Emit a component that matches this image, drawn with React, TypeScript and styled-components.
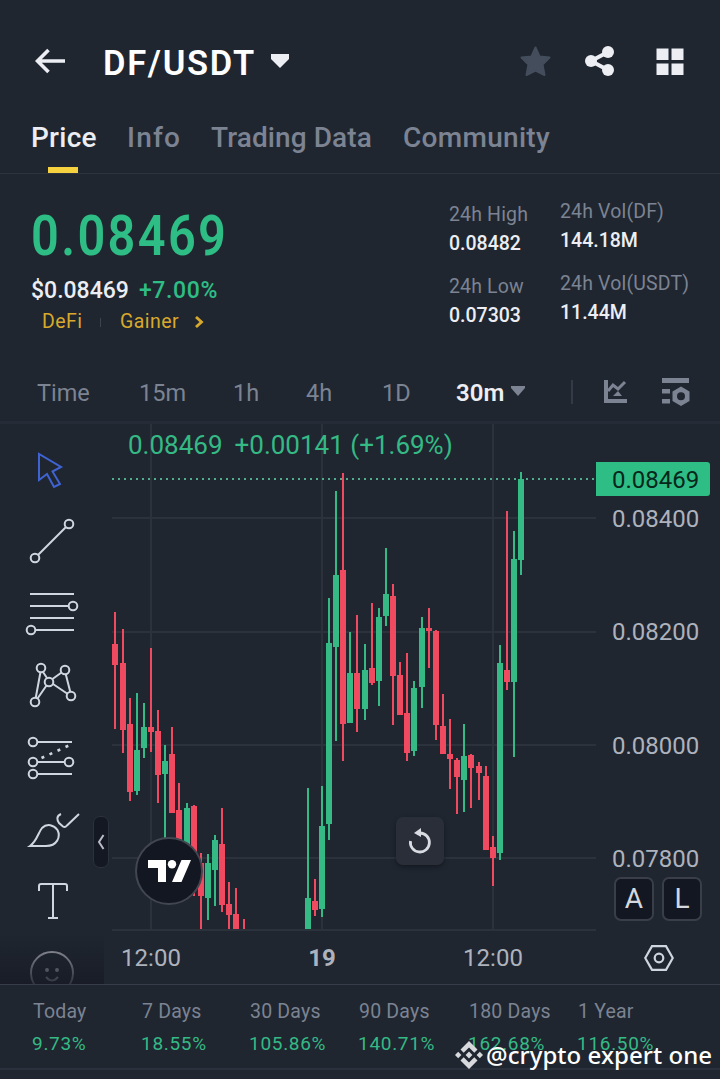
import React from 'react';
import styled, { createGlobalStyle, css } from 'styled-components';

const color = {
  bg: '#1f2630',
  line: '#2c333e',
  muted: '#7c8392',
  light: '#eceef3',
  green: '#2ebd85',
  candleUp: '#35b985',
  red: '#f04a60',
  gold: '#d9a92b',
  tool: '#d0d6e0',
  axis: '#aeb2bc',
};

const GlobalStyle = createGlobalStyle`
  * { box-sizing: border-box; }
  body { margin: 0; background: ${color.bg}; }
  svg { display: block; flex: none; }
`;

const Screen = styled.div`
  position: relative;
  width: 720px;
  height: 1079px;
  overflow: hidden;
  display: flex;
  flex-direction: column;
  background: ${color.bg};
  color: ${color.light};
  font-family: Roboto, 'Open Sans', sans-serif;
  white-space: nowrap;
`;

const Header = styled.header`
  height: 104px;
  padding: 18px 36px 0 35px;
  display: flex;
  align-items: center;
`;

const Title = styled.h1`
  margin: 0 0 0 37px;
  padding-top: 3px;
  width: 168px;
  font: 600 34.5px/44px Roboto, sans-serif;
  letter-spacing: 1.7px;
  color: #fff;
`;

const HeaderActions = styled.div`
  margin-left: auto;
  display: flex;
  align-items: center;
`;

const ShareSlot = styled.div`
  margin: 0 41px 0 34px;
`;

const Tabs = styled.nav`
  height: 70px;
  border-bottom: 1px solid ${color.line};
  padding-left: 31px;
  display: flex;
`;

const Tab = styled.a<{ $width: number; $active?: boolean; $spacing?: number }>`
  position: relative;
  width: ${(p) => p.$width}px;
  font: 500 28px/67px Roboto, sans-serif;
  letter-spacing: ${(p) => p.$spacing ?? 0.25}px;
  color: ${(p) => (p.$active ? color.light : color.muted)};
  ${(p) =>
    p.$active &&
    css`
      &::after {
        content: '';
        position: absolute;
        left: 17px;
        bottom: 0;
        width: 30px;
        height: 6px;
        background: #f5d13f;
      }
    `}
`;

const Summary = styled.section`
  height: 188px;
  display: flex;
  padding-left: 31px;
`;

const PriceBlock = styled.div`
  width: 418px;
  padding-top: 31px;
`;

const BigPrice = styled.div`
  width: 240px;
  font-size: 56px;
  line-height: 62px;
  font-weight: 600;
  letter-spacing: 2.7px;
  transform: scaleX(0.87);
  transform-origin: left;
  color: ${color.green};
`;

const PriceLine = styled.div`
  display: flex;
  margin-top: 9px;
  font-size: 23px;
  line-height: 30px;
  font-weight: 500;
`;

const Fiat = styled.span`
  width: 108px;
`;

const Change = styled.span`
  color: ${color.green};
  letter-spacing: 0.6px;
`;

const TagLine = styled.div`
  display: flex;
  align-items: center;
  padding-left: 11px;
  font-size: 19.5px;
  line-height: 32px;
  letter-spacing: 0.45px;
  color: ${color.gold};
`;

const TagDivider = styled.i`
  width: 1px;
  height: 9px;
  margin: 0 19px 0 18px;
  background: #3c4450;
`;

const TagText = styled.span<{ $width: number }>`
  width: ${(p) => p.$width}px;
`;

const StatColumn = styled.div<{ $width: number; $top: number }>`
  width: ${(p) => p.$width}px;
  padding-top: ${(p) => p.$top}px;
`;

const Stat = styled.div`
  height: 72px;
`;

const StatLabel = styled.div`
  font-size: 19.5px;
  line-height: 28px;
  letter-spacing: 0.15px;
  color: ${color.muted};
`;

const StatValue = styled.div`
  font-size: 19.5px;
  line-height: 29px;
  font-weight: 500;
`;

const Intervals = styled.div`
  height: 62px;
  padding-left: 37px;
  display: flex;
  align-items: center;
  border-bottom: 3px solid #252c37;
`;

const Interval = styled.span<{ $width: number; $active?: boolean }>`
  width: ${(p) => p.$width}px;
  padding-top: 3px;
  font-size: ${(p) => (p.$active ? 24 : 23.5)}px;
  line-height: 30px;
  font-weight: ${(p) => (p.$active ? 600 : 400)};
  color: ${(p) => (p.$active ? color.light : color.muted)};
`;

const IntervalDivider = styled.i`
  width: 2px;
  height: 24px;
  margin: 0 31px 0 46px;
  background: #343b46;
`;

const IndicatorSlot = styled.div`
  margin-right: 34px;
`;

const ChartPanel = styled.section`
  height: 561px;
  border-bottom: 1px solid #373e49;
  display: grid;
  grid-template-columns: 112px 484px 124px;
  grid-template-rows: 506px 54px;
`;

const Toolbar = styled.aside`
  grid-row: 1 / 3;
  position: relative;
  overflow: hidden;
  &::after {
    content: '';
    position: absolute;
    left: 0;
    bottom: 0;
    width: 104px;
    height: 50px;
    background: linear-gradient(rgba(23, 26, 37, 0), rgba(23, 26, 37, 0.82));
  }
`;

const Handle = styled.button`
  position: absolute;
  z-index: 1;
  left: 93px;
  top: 392px;
  width: 16px;
  height: 52px;
  padding: 0;
  border: 1px solid #2c323d;
  border-radius: 7px;
  background: #141823;
  display: flex;
  align-items: center;
  justify-content: center;
`;

const Plot = styled.div`
  position: relative;
`;

const Legend = styled.div`
  position: absolute;
  left: 16px;
  top: 6px;
  font-size: 26px;
  line-height: 31px;
  color: ${color.candleUp};
  display: flex;
  gap: 12px;
`;

const Logo = styled.div`
  position: absolute;
  left: 23px;
  top: 413px;
  width: 68px;
  height: 68px;
  border: 2px solid #424650;
  border-radius: 50%;
  background: #131722;
  display: flex;
  align-items: center;
  justify-content: center;
`;

const ResetButton = styled.button`
  position: absolute;
  left: 284px;
  top: 393px;
  width: 48px;
  height: 48px;
  padding: 0;
  border: 0;
  border-radius: 7px;
  background: #2a2e39;
  box-shadow: 0 2px 5px rgba(0, 0, 0, 0.35);
  display: flex;
  align-items: center;
  justify-content: center;
`;

const PriceAxis = styled.div`
  padding-top: 38px;
  font-size: 24px;
`;

const LastPrice = styled.div`
  width: 114px;
  height: 34px;
  padding-left: 16px;
  border-radius: 0 3px 3px 0;
  background: ${color.green};
  color: #08271b;
  line-height: 36px;
`;

const AxisLabels = styled.div`
  height: 378px;
  padding: 8px 0 0 16px;
  display: flex;
  flex-direction: column;
  justify-content: space-between;
  line-height: 30px;
  color: ${color.axis};
`;

const ScaleButtons = styled.div`
  display: flex;
  gap: 8px;
  padding: 3px 0 0 18px;
`;

const ScaleButton = styled.button`
  width: 40px;
  height: 44px;
  padding: 0;
  border: 2px solid #393e48;
  border-radius: 7px;
  background: #131722;
  color: #d5d8df;
  font: 400 28px/38px Roboto, sans-serif;
`;

const TimeAxis = styled.div`
  display: grid;
  grid-template-columns: 78px 1fr 78px;
  padding: 0 64px 0 0;
  color: ${color.axis};
  font-size: 24px;
  line-height: 57px;
  text-align: center;
`;

const TimeLabel = styled.span<{ $bold?: boolean }>`
  font-weight: ${(p) => (p.$bold ? 700 : 400)};
`;

const AxisSettings = styled.div`
  display: flex;
  align-items: center;
  padding: 2px 0 0 48px;
`;

const Performance = styled.section`
  height: 85px;
  border-bottom: 2px solid #2a313c;
  padding: 11px 0 0 33px;
  display: grid;
  grid-template-columns: 109px 108px 109px 110px 109px 1fr;
`;

const PeriodLabel = styled.div`
  font-size: 19.5px;
  line-height: 32px;
  letter-spacing: 0.2px;
  color: ${color.muted};
`;

const PeriodChange = styled.div`
  margin-left: -1px;
  font-size: 19px;
  line-height: 32px;
  letter-spacing: 0.7px;
  color: ${color.candleUp};
`;

const Watermark = styled.div`
  position: absolute;
  left: 455px;
  top: 1038px;
  height: 34px;
  display: flex;
  align-items: center;
  gap: 3px;
  color: #fff;
  font: 500 24px/34px 'Noto Sans', sans-serif;
  letter-spacing: 0.05px;
`;

type Candle = [x: number, high: number, top: number, bottom: number, low: number, up: 0 | 1];

const candles: Candle[] = [
  [115, 612, 644, 665, 729, 0], [123, 629, 663, 730, 753, 0], [130, 698, 724, 792, 801, 0],
  [137, 693, 750, 791, 795, 1], [144, 703, 727, 748, 758, 1], [151, 648, 727, 732, 752, 0],
  [158, 710, 731, 775, 803, 0], [165, 745, 761, 774, 840, 1], [172, 727, 754, 813, 813, 0],
  [179, 783, 810, 850, 850, 0], [187, 803, 808, 850, 850, 1], [194, 805, 806, 860, 896, 0],
  [201, 853, 863, 896, 929, 0], [208, 854, 863, 898, 920, 1], [215, 835, 840, 870, 906, 1],
  [222, 808, 844, 905, 912, 0], [229, 882, 904, 915, 929, 0], [236, 888, 914, 929, 929, 0],
  [244, 919, 929, 929, 929, 0], [308, 788, 898, 929, 929, 1], [315, 879, 901, 910, 916, 0],
  [322, 786, 826, 909, 917, 1], [329, 598, 643, 824, 840, 1], [336, 491, 575, 647, 741, 1],
  [343, 473, 570, 724, 761, 0], [350, 632, 673, 723, 723, 1], [357, 615, 673, 709, 732, 0],
  [365, 644, 670, 709, 720, 1], [372, 603, 668, 683, 685, 0], [379, 608, 617, 681, 706, 1],
  [386, 548, 594, 616, 626, 1], [393, 584, 596, 676, 725, 0], [400, 662, 675, 715, 715, 0],
  [407, 653, 713, 753, 761, 0], [414, 681, 688, 751, 756, 1], [422, 617, 628, 687, 708, 1],
  [429, 608, 628, 631, 668, 0], [436, 630, 631, 725, 740, 0], [443, 694, 726, 754, 754, 0],
  [450, 719, 754, 759, 789, 0], [457, 758, 760, 777, 814, 0], [464, 724, 756, 780, 812, 1],
  [471, 754, 755, 768, 808, 0], [479, 762, 766, 773, 800, 0], [486, 766, 776, 850, 850, 0],
  [493, 836, 847, 858, 886, 0], [500, 645, 663, 853, 860, 1], [507, 511, 670, 682, 690, 0],
  [514, 531, 559, 682, 757, 1], [521, 472, 479, 560, 575, 1],
];

const CandleChart = () => (
  <svg width="484" height="507" viewBox="112 424 484 507" shapeRendering="crispEdges">
    <g fill="#2b323c">
      {[517, 631, 744, 857].map((y) => <rect key={y} x="112" y={y} width="484" height="2" />)}
      {[150, 321, 492].map((x) => <rect key={x} x={x} y="424" width="2" height="506" />)}
      <rect x="112" y="929" width="484" height="2" />
    </g>
    <path d="M112 479H596" stroke="#51ad8b" strokeWidth="2" strokeDasharray="2 4" />
    {candles.map(([x, high, top, bottom, low, up]) => (
      <g key={x} fill={up ? color.candleUp : color.red}>
        <rect x={x - 1} y={high} width="2" height={low - high} />
        <rect x={x - 3} y={top} width="6" height={bottom - top} />
      </g>
    ))}
  </svg>
);

const DrawingTools = () => (
  <svg width="112" height="560" viewBox="0 424 112 560" fill="none" stroke={color.tool} strokeWidth="2">
    <path d="M39 454V480L47 474L54 487L60 484L52.5 471.5L61 467Z" stroke="#3f63d2" />
    <circle cx="69" cy="524" r="4.3" /><circle cx="35" cy="558" r="4.3" /><path d="M38 555L66 527" />
    <path d="M30 594H74M30 606H69M30 618H74M35 630H74" />
    <circle cx="73" cy="606" r="4.3" /><circle cx="31" cy="630" r="4.3" />
    <circle cx="41" cy="668" r="4.3" /><circle cx="65" cy="670" r="4.3" /><circle cx="49" cy="682" r="4.3" />
    <circle cx="71" cy="696" r="4.3" /><circle cx="35" cy="702" r="4.3" />
    <path d="M40.5 672L35.7 698M43 672L47 678M61.5 672.5L52.5 679M65.7 674L70.3 692M53 684L67 693.5M46.5 685.5L37.5 698.5" />
    <path d="M37 742H72M37 762H65M37 774H72" />
    <circle cx="33" cy="742" r="4.3" /><circle cx="33" cy="762" r="4.3" /><circle cx="69" cy="762" r="4.3" /><circle cx="33" cy="774" r="4.3" />
    <path d="M41.500 758L70 745" strokeWidth="2.600" strokeDasharray="3 5.800" />
    <path d="M30 846C37 841 38 833 42 828C47 823 54 825 57.500 830C61 837 57 846 46 846Z" />
    <path d="M61 814C56 816 57 820 59 823L63 826.500Q65 828 67 825.500L79 814" />
    <path d="M39 891V886Q39 884 41 884H65Q67 884 67 886V891M53 884V918M48 918H58" />
    <g stroke="#a8abb2">
      <circle cx="52" cy="973" r="21" />
      <circle cx="47" cy="970" r="1.2" fill="#a8abb2" strokeWidth="1.500" /><circle cx="57" cy="970" r="1.2" fill="#a8abb2" strokeWidth="1.500" />
      <path d="M46 977Q52 984 58 977" />
    </g>
  </svg>
);

const BackIcon = () => (
  <svg width="31" height="26" viewBox="35 48 31 26" fill="none" stroke={color.light} strokeWidth="3.600">
    <path d="M65 61H38M48.500 50L37.500 61L48.500 72" />
  </svg>
);

const StarIcon = () => (
  <svg width="31" height="31" viewBox="0 0 31 31">
    <path d="M15.500 1.500L19.500 10.500L29.500 11.500L22.500 18.500L24.500 29L15.500 24.500L6.500 29L8.500 18.500L1.500 11.500L11.500 10.500Z" fill="#434d5c" stroke="#434d5c" strokeWidth="2" strokeLinejoin="round" />
  </svg>
);

const ShareIcon = () => (
  <svg width="29" height="32" viewBox="0 0 29 32" fill={color.light}>
    <circle cx="6" cy="16" r="6" /><circle cx="23" cy="7" r="6" /><circle cx="23" cy="25" r="6" />
    <path d="M23 7L6 16L23 25" fill="none" stroke={color.light} strokeWidth="4" />
  </svg>
);

const GridIcon = () => (
  <svg width="29" height="29" viewBox="0 0 29 29" fill={color.light}>
    <path d="M1.500 1.500H13.500V13H1.500ZM16.500 1.500H28.500V13H16.500ZM1.500 16.500H13.500V28H1.500ZM16.500 16.500H28.500V28H16.500Z" />
  </svg>
);

const IndicatorIcon = () => (
  <svg width="24" height="24" viewBox="0 0 24 24" fill="none" stroke={color.muted}>
    <path d="M2 0V21H23" strokeWidth="4" />
    <path d="M4 11L9 5L14 9L21 2" strokeWidth="3" />
    <path d="M9 16L14 11L18 16Z" fill={color.muted} stroke="none" />
  </svg>
);

const LayoutSettingsIcon = () => (
  <svg width="29" height="29" viewBox="0 0 29 29" fill={color.muted}>
    <path d="M0 1H27V6H0ZM0 12H8V16.500H0ZM0 22H8V26.500H0Z" />
    <path fillRule="evenodd" d="M19 9.500L27.500 14.500V24L19 29L10.500 24V14.500ZM19 15.300A4 4 0 1 0 19 23.300A4 4 0 1 0 19 15.300Z" />
  </svg>
);

const LogoMark = () => (
  <svg width="44" height="22" viewBox="0 0 44 22" fill="#fff">
    <path d="M1 0H19V22H11V8H1ZM34.500 0H44L34.500 22H25Z" /><circle cx="25" cy="4.200" r="4.200" />
  </svg>
);

const ResetIcon = () => (
  <svg width="24" height="26" viewBox="0 0 24 26" fill="none" stroke="#d9dbe2" strokeWidth="2.800">
    <path d="M2.500 13A9.500 9.500 0 1 0 12 5H9" /><path d="M6 5L13 0V9Z" fill="#d9dbe2" stroke="none" />
  </svg>
);

const BinanceMark = () => (
  <svg width="28" height="28" viewBox="0 0 28 28" fill="#d8d9dc">
    <path d="M14 0L22.500 8.500L19.300 11.700L14 6.400L8.700 11.700L5.500 8.500ZM14 28L5.500 19.500L8.700 16.300L14 21.600L19.300 16.300L22.500 19.500ZM3.200 10.800L6.400 14L3.200 17.200L0 14ZM24.800 10.800L28 14L24.800 17.200L21.600 14ZM14 10.600L17.400 14L14 17.400L10.600 14Z" />
  </svg>
);

const periods = [
  ['Today', '9.73%'], ['7 Days', '18.55%'], ['30 Days', '105.86%'],
  ['90 Days', '140.71%'], ['180 Days', '162.68%'], ['1 Year', '116.50%'],
];

export default function App() {
  return (
    <Screen>
      <GlobalStyle />
      <Header>
        <BackIcon />
        <Title>DF/USDT</Title>
        <svg width="18" height="15" viewBox="0 0 18 15"><path d="M0 0H18V5L9 14L0 5Z" fill={color.light} /></svg>
        <HeaderActions>
          <StarIcon />
          <ShareSlot><ShareIcon /></ShareSlot>
          <GridIcon />
        </HeaderActions>
      </Header>
      <Tabs>
        <Tab $width={96} $active>Price</Tab>
        <Tab $width={84} $spacing={1.2}>Info</Tab>
        <Tab $width={192} $spacing={0.1}>Trading Data</Tab>
        <Tab $width={160} $spacing={0.3}>Community</Tab>
      </Tabs>
      <Summary>
        <PriceBlock>
          <BigPrice>0.08469</BigPrice>
          <PriceLine><Fiat>$0.08469</Fiat><Change>+7.00%</Change></PriceLine>
          <TagLine>
            <TagText $width={40}>DeFi</TagText>
            <TagDivider />
            <TagText $width={75}>Gainer</TagText>
            <svg width="9" height="12" viewBox="0 0 9 12" fill="none" stroke={color.gold} strokeWidth="2.800"><path d="M1 1L6.500 6L1 11" /></svg>
          </TagLine>
        </PriceBlock>
        <StatColumn $width={111} $top={27}>
          <Stat><StatLabel>24h High</StatLabel><StatValue>0.08482</StatValue></Stat>
          <Stat><StatLabel>24h Low</StatLabel><StatValue>0.07303</StatValue></Stat>
        </StatColumn>
        <StatColumn $width={150} $top={24}>
          <Stat><StatLabel>24h Vol(DF)</StatLabel><StatValue>144.18M</StatValue></Stat>
          <Stat><StatLabel>24h Vol(USDT)</StatLabel><StatValue>11.44M</StatValue></Stat>
        </StatColumn>
      </Summary>
      <Intervals>
        <Interval $width={102}>Time</Interval>
        <Interval $width={94}>15m</Interval>
        <Interval $width={73}>1h</Interval>
        <Interval $width={76}>4h</Interval>
        <Interval $width={74}>1D</Interval>
        <Interval $width={55} $active>30m</Interval>
        <svg width="14" height="15" viewBox="0 0 14 15"><path d="M0 2H14V4L7 12L0 4Z" fill={color.muted} /></svg>
        <IntervalDivider />
        <IndicatorSlot><IndicatorIcon /></IndicatorSlot>
        <LayoutSettingsIcon />
      </Intervals>
      <ChartPanel>
        <Toolbar>
          <DrawingTools />
          <Handle>
            <svg width="8" height="16" viewBox="0 0 8 16" fill="none" stroke="#b9bcc4" strokeWidth="2"><path d="M6.500 1L2 8L6.500 15" /></svg>
          </Handle>
        </Toolbar>
        <Plot>
          <CandleChart />
          <Legend><span>0.08469</span><span>+0.00141 (+1.69%)</span></Legend>
          <Logo><LogoMark /></Logo>
          <ResetButton><ResetIcon /></ResetButton>
        </Plot>
        <PriceAxis>
          <LastPrice>0.08469</LastPrice>
          <AxisLabels>
            <span>0.08400</span><span>0.08200</span><span>0.08000</span><span>0.07800</span>
          </AxisLabels>
          <ScaleButtons><ScaleButton>A</ScaleButton><ScaleButton>L</ScaleButton></ScaleButtons>
        </PriceAxis>
        <TimeAxis><TimeLabel>12:00</TimeLabel><TimeLabel $bold>19</TimeLabel><TimeLabel>12:00</TimeLabel></TimeAxis>
        <AxisSettings>
          <svg width="30" height="26" viewBox="0 0 30 26" fill="none" stroke={color.tool} strokeWidth="2.200">
            <path d="M8 1.200H22L28.800 13L22 24.800H8L1.200 13Z" /><circle cx="15" cy="13" r="4.300" />
          </svg>
        </AxisSettings>
      </ChartPanel>
      <Performance>
        {periods.map(([label, change]) => (
          <div key={label}><PeriodLabel>{label}</PeriodLabel><PeriodChange>{change}</PeriodChange></div>
        ))}
      </Performance>
      <Watermark><BinanceMark />@crypto expert one</Watermark>
    </Screen>
  );
}
